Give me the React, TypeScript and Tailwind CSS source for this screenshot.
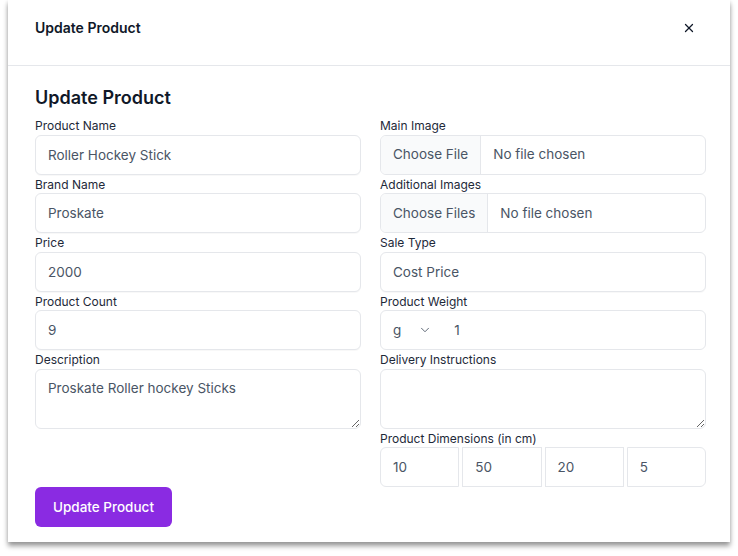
import { X, ChevronDown } from 'lucide-react';

const inputCls =
  'w-full h-10 rounded-md border border-gray-200 bg-white px-3 text-[13.5px] text-gray-600 outline-none shadow-[0_1px_1px_rgba(0,0,0,0.03)]';

function Label({ children }: { children: React.ReactNode }) {
  return <label className="block h-[18.5px] text-xs leading-[19px] text-gray-800">{children}</label>;
}

function TextField({ label, value }: { label: string; value: string }) {
  return (
    <div>
      <Label>{label}</Label>
      <input className={inputCls} value={value} readOnly />
    </div>
  );
}

function FileField({ label, button }: { label: string; button: string }) {
  return (
    <div>
      <Label>{label}</Label>
      <div className="flex h-10 items-stretch overflow-hidden rounded-md border border-gray-200 text-[13.5px] text-gray-600">
        <span className="flex items-center border-r border-gray-200 bg-gray-50 px-3">{button}</span>
        <span className="flex items-center px-3">No file chosen</span>
      </div>
    </div>
  );
}

function AreaField({ label, value }: { label: string; value: string }) {
  return (
    <div>
      <Label>{label}</Label>
      <textarea
        className="block h-[60px] w-full rounded-md border border-gray-200 px-3 py-2 text-[13.5px] text-gray-600 outline-none"
        value={value}
        readOnly
      />
    </div>
  );
}

export default function App() {
  const dims = ['10', '50', '20', '5'];
  return (
    <div className="min-h-[556px] bg-white px-2 font-['Inter',sans-serif]">
      <div className="bg-white shadow-[0_4px_5px_rgba(0,0,0,0.4),0_0_4px_rgba(0,0,0,0.08)]">
        <div className="flex h-[66px] items-start justify-between border-b border-gray-200 pl-[27px] pr-[34px] pt-[18px]">
          <h1 className="text-sm font-semibold leading-5 text-gray-900">Update Product</h1>
          <X className="mt-[3px] h-[14px] w-[14px] text-gray-900" strokeWidth={2.2} />
        </div>
        <div className="pb-[15px] pl-[27px] pr-[24px] pt-[18px]">
          <h2 className="mb-[4px] text-lg font-semibold leading-7 text-gray-900">Update Product</h2>
          <div className="grid grid-cols-2 gap-x-[19px]">
            <div className="flex flex-col">
              <TextField label="Product Name" value="Roller Hockey Stick" />
              <TextField label="Brand Name" value="Proskate" />
              <TextField label="Price" value="2000" />
              <TextField label="Product Count" value="9" />
              <AreaField label="Description" value="Proskate Roller hockey Sticks" />
            </div>
            <div className="flex flex-col">
              <FileField label="Main Image" button="Choose File" />
              <FileField label="Additional Images" button="Choose Files" />
              <TextField label="Sale Type" value="Cost Price" />
              <div>
                <Label>Product Weight</Label>
                <div className="flex h-10 items-center rounded-md border border-gray-200 px-3 text-[13.5px] text-gray-600">
                  <span>g</span>
                  <ChevronDown className="ml-[17px] h-[14px] w-[14px] text-gray-600" strokeWidth={1.5} />
                  <span className="ml-[22px]">1</span>
                </div>
              </div>
              <AreaField label="Delivery Instructions" value="" />
              <div>
                <Label>Product Dimensions (in cm)</Label>
                <div className="grid grid-cols-4 gap-[3px]">
                  {dims.map((d, i) => (
                    <div
                      key={i}
                      className={`flex h-10 items-center border border-gray-200 px-3 text-[13.5px] text-gray-600 ${
                        i === 0 ? 'rounded-l-md' : i === 3 ? 'rounded-r-md' : ''
                      }`}
                    >
                      {d}
                    </div>
                  ))}
                </div>
              </div>
            </div>
          </div>
          <button className="h-10 rounded-md bg-[#8a2be2] px-[18px] text-[13.5px] font-medium text-white">
            Update Product
          </button>
        </div>
      </div>
    </div>
  );
}
